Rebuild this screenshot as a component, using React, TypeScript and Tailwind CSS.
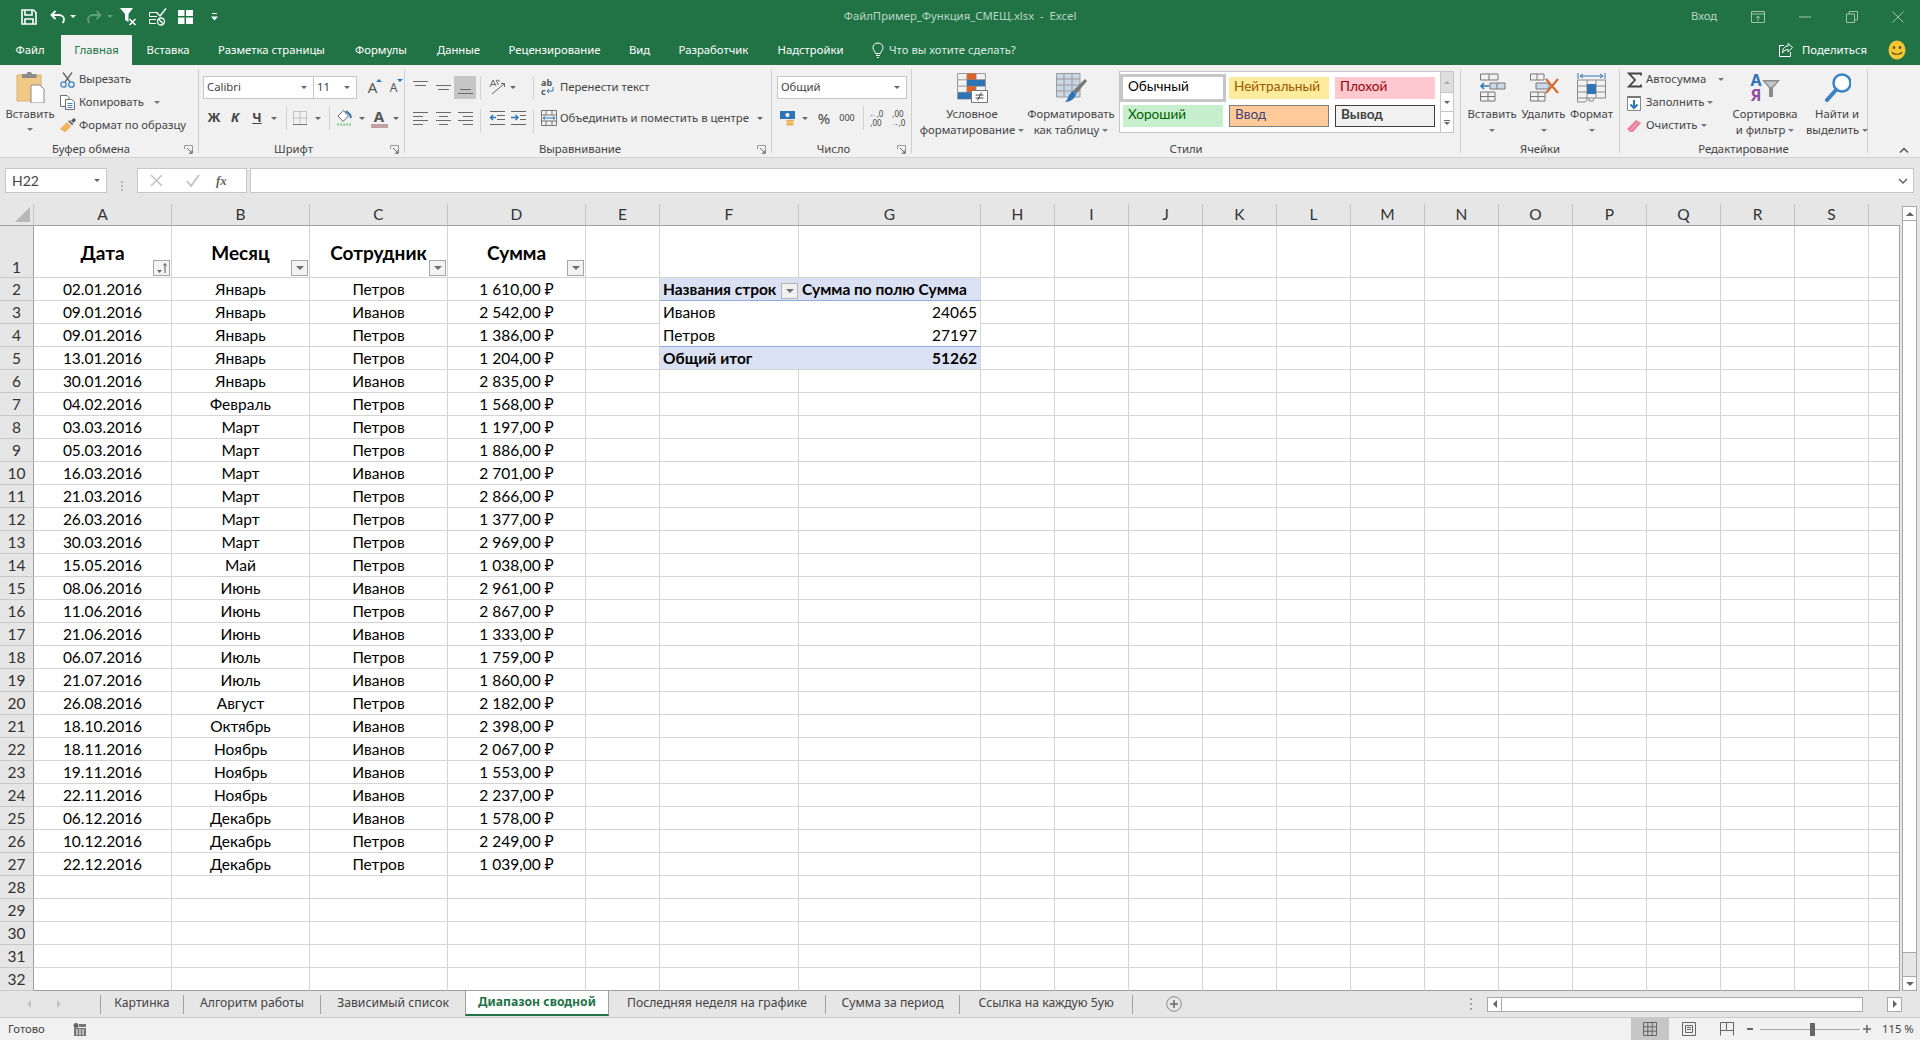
import React from 'react'

const cellFont = "font-['Lato','Carlito','Noto_Sans',sans-serif]"

const letters = ['A', 'B', 'C', 'D', 'E', 'F', 'G', 'H', 'I', 'J', 'K', 'L', 'M', 'N', 'O', 'P', 'Q', 'R', 'S', '']

const rows = [
    ['02.01.2016', 'Январь', 'Петров', '1 610,00 ₽'],
    ['09.01.2016', 'Январь', 'Иванов', '2 542,00 ₽'],
    ['09.01.2016', 'Январь', 'Петров', '1 386,00 ₽'],
    ['13.01.2016', 'Январь', 'Петров', '1 204,00 ₽'],
    ['30.01.2016', 'Январь', 'Иванов', '2 835,00 ₽'],
    ['04.02.2016', 'Февраль', 'Петров', '1 568,00 ₽'],
    ['03.03.2016', 'Март', 'Петров', '1 197,00 ₽'],
    ['05.03.2016', 'Март', 'Петров', '1 886,00 ₽'],
    ['16.03.2016', 'Март', 'Иванов', '2 701,00 ₽'],
    ['21.03.2016', 'Март', 'Петров', '2 866,00 ₽'],
    ['26.03.2016', 'Март', 'Петров', '1 377,00 ₽'],
    ['30.03.2016', 'Март', 'Петров', '2 969,00 ₽'],
    ['15.05.2016', 'Май', 'Петров', '1 038,00 ₽'],
    ['08.06.2016', 'Июнь', 'Иванов', '2 961,00 ₽'],
    ['11.06.2016', 'Июнь', 'Петров', '2 867,00 ₽'],
    ['21.06.2016', 'Июнь', 'Иванов', '1 333,00 ₽'],
    ['06.07.2016', 'Июль', 'Петров', '1 759,00 ₽'],
    ['21.07.2016', 'Июль', 'Иванов', '1 860,00 ₽'],
    ['26.08.2016', 'Август', 'Петров', '2 182,00 ₽'],
    ['18.10.2016', 'Октябрь', 'Иванов', '2 398,00 ₽'],
    ['18.11.2016', 'Ноябрь', 'Иванов', '2 067,00 ₽'],
    ['19.11.2016', 'Ноябрь', 'Иванов', '1 553,00 ₽'],
    ['22.11.2016', 'Ноябрь', 'Иванов', '2 237,00 ₽'],
    ['06.12.2016', 'Декабрь', 'Иванов', '1 578,00 ₽'],
    ['10.12.2016', 'Декабрь', 'Петров', '2 249,00 ₽'],
    ['22.12.2016', 'Декабрь', 'Петров', '1 039,00 ₽'],
]

const titles = ['Дата', 'Месяц', 'Сотрудник', 'Сумма']

function Caret({ className = 'border-t-[#666]' }: { className?: string }) {
    return <span className={`inline-block h-0 w-0 border-x-[3px] border-t-[3px] border-x-transparent ${className}`} />
}

function Launcher() {
    return (
        <svg width="9" height="9" viewBox="0 0 9 9" className="absolute bottom-[-1px] right-[5px]" fill="none">
            <path d="M.5 4V.5H8.5V8.5H5" stroke="#9a9a9a" />
            <path d="M3 3L8 8M8 5V8H5" stroke="#6d6d6d" />
        </svg>
    )
}

function Group({ label, launcher, w, children }: { label: string; launcher?: boolean; w: string; children: React.ReactNode }) {
    return (
        <div className={`relative flex h-[84px] shrink-0 flex-col border-r border-[#cfcfcf] ${w}`}>
            <div className="flex h-[76px] shrink-0">{children}</div>
            <div className={`h-[8px] text-center text-[11.3px] leading-[8px] text-[#444] ${launcher ? 'pr-4' : ''}`}>{label}</div>
            {launcher && <Launcher />}
        </div>
    )
}

function Big({ w, icon, lines, arrowBelow }: { w: string; icon: React.ReactNode; lines: string[]; arrowBelow?: boolean }) {
    return (
        <div className={`flex shrink-0 flex-col items-center pt-[3px] ${w}`}>
            <div className="flex h-[31px] items-center justify-center">{icon}</div>
            <div className="mt-[3px] flex flex-col items-center whitespace-nowrap text-[11.3px] leading-[16px] text-[#444]">
                {lines.map((l, i) => (
                    <span key={l} className="flex items-center gap-[3px]">
                        {l}
                        {!arrowBelow && i === lines.length - 1 && <Caret className="border-t-[#777]" />}
                    </span>
                ))}
                {arrowBelow && (
                    <span className="flex h-[16px] items-center">
                        <Caret className="border-t-[#777]" />
                    </span>
                )}
            </div>
        </div>
    )
}

function Small({ icon, text, caret, caretGap }: { icon: React.ReactNode; text: string; caret?: boolean; caretGap?: string }) {
    return (
        <div className="flex h-[23px] items-center whitespace-nowrap text-[11.3px] text-[#444]">
            <span className="flex w-[19px] shrink-0 items-center">{icon}</span>
            <span>{text}</span>
            {caret && <span className={`flex items-center ${caretGap}`}><Caret className="border-t-[#777]" /></span>}
        </div>
    )
}

function Sep() {
    return <span className="h-[24px] w-px shrink-0 bg-[#d4d4d4]" />
}

function Lines({ kind }: { kind: 'top' | 'middle' | 'bottom' | 'left' | 'center' | 'right' }) {
    const d = {
        top: 'M0 1.5H15M2 5.5H13',
        middle: 'M0 5.5H15M2 9.5H13',
        bottom: 'M2 9.5H13M0 13.5H15',
        left: 'M0 1.5H15M0 5.5H10M0 9.5H15M0 13.5H10',
        center: 'M0 1.5H15M3 5.5H12M0 9.5H15M3 13.5H12',
        right: 'M0 1.5H15M5 5.5H15M0 9.5H15M5 13.5H15',
    }[kind]
    return (
        <svg width="15" height="15" viewBox="0 0 15 15">
            <path d={d} stroke="#6a6a6a" fill="none" />
        </svg>
    )
}

function FilterButton({ sorted }: { sorted?: boolean }) {
    return (
        <span className="absolute bottom-[1px] right-[1px] flex h-[16px] w-[17px] items-center justify-center border border-[#a6a6a6] bg-[#f3f3f3]">
            {sorted ? (
                <svg width="13" height="12" viewBox="0 0 13 12">
                    <path d="M2 8H7L4.5 11Z" fill="#666" />
                    <path d="M10 11V2M8.5 3.5L10 1.5L11.5 3.5" stroke="#555" fill="none" />
                </svg>
            ) : (
                <Caret className="border-t-[#6f6f6f] !border-x-[4px] !border-t-[4px]" />
            )}
        </span>
    )
}

function Cell({ r, c }: { r: number; c: number }) {
    // r: 1-based sheet row, c: 0 = A
    const last = c === 19
    const inPivot = r >= 2 && r <= 5 && (c === 5 || c === 6)
    const hardBottom = r === 32 ? 'border-b-[#a0a0a0]' : 'border-b-[#d4d4d4]'
    const hardRight = last ? 'border-r-[#a0a0a0]' : 'border-r-[#d4d4d4]'

    if (r === 1) {
        return (
            <div className={`relative flex items-center justify-center border-b border-r bg-white pt-[4px] text-[19px] font-bold text-black ${hardBottom} ${hardRight}`}>
                {c < 4 && <span>{titles[c]}</span>}
                {c < 4 && <FilterButton sorted={c === 0} />}
            </div>
        )
    }
    if (inPivot) {
        const head = r === 2 || r === 5
        const fill = head ? 'bg-[#d9e1f2] font-bold' : 'bg-white'
        const bottom = r === 2 || r === 4 ? 'border-b border-b-[#8ea9db]' : r === 5 ? 'border-b border-b-[#d4d4d4]' : 'border-b border-b-white'
        const right = c === 5 ? 'border-r-0' : 'border-r border-r-[#d4d4d4]'
        let text: React.ReactNode = null
        if (c === 5) {
            text = ['Названия строк', 'Иванов', 'Петров', 'Общий итог'][r - 2]
        } else {
            text = ['Сумма по полю Сумма', '24065', '27197', '51262'][r - 2]
        }
        return (
            <div className={`relative flex items-center whitespace-nowrap px-[3px] pt-[2px] text-[15.5px] text-black ${fill} ${bottom} ${right} ${c === 6 && r > 2 ? 'justify-end pr-[3px]' : ''}`}>
                {text}
                {c === 5 && r === 2 && (
                    <span className="absolute bottom-[1px] right-[1px] flex h-[16px] w-[17px] items-center justify-center border border-[#b5b5b5] bg-[#f0f0f0]">
                        <Caret className="border-t-[#6f6f6f] !border-x-[4px] !border-t-[4px]" />
                    </span>
                )}
            </div>
        )
    }
    const data = r >= 2 && r <= 27 && c < 4 ? rows[r - 2][c] : ''
    return (
        <div className={`flex items-center justify-center whitespace-nowrap border-b border-r bg-white pt-[2px] text-[15.5px] text-black ${hardBottom} ${hardRight}`}>
            {data}
        </div>
    )
}

function Sheet() {
    const rowNums = Array.from({ length: 32 }, (_, i) => i + 1)
    return (
        <div className={`${cellFont} grid h-[787px] w-[1900px] grid-cols-[34px_138px_138px_138px_138px_74px_139px_182px_repeat(12,74px)_31px] grid-rows-[22px_52px_repeat(31,23px)]`}>
            <div className="flex items-center justify-end border-b border-r border-b-[#a0a0a0] border-r-[#c4c4c4] bg-[#e6e6e6] pr-[3px]">
                <svg width="15" height="15" viewBox="0 0 15 15">
                    <path d="M15 0V15H0Z" fill="#b8b8b8" />
                </svg>
            </div>
            {letters.map((l, i) => (
                <div key={i} className={`flex items-center justify-center border-b border-b-[#a0a0a0] bg-[#e6e6e6] text-[15.5px] text-[#333] ${i === 19 ? '' : 'border-r border-r-[#c4c4c4]'}`}>
                    {l}
                </div>
            ))}
            {rowNums.map(r => (
                <React.Fragment key={r}>
                    <div className={`flex justify-center border-b border-r border-b-[#c8c8c8] border-r-[#a0a0a0] bg-[#e6e6e6] text-[15.5px] text-[#333] ${r === 1 ? 'items-end leading-[20px]' : 'items-center pt-[2px]'}`}>
                        {r}
                    </div>
                    {letters.map((_, c) => (
                        <Cell key={c} r={r} c={c} />
                    ))}
                </React.Fragment>
            ))}
        </div>
    )
}

function TitleBar() {
    return (
        <div className="flex h-[35px] shrink-0 items-center pb-[2px] text-[11.3px]">
            <div className="flex w-[640px] items-center">
                <svg width="16" height="16" viewBox="0 0 16 16" className="ml-[21px]" fill="none">
                    <path d="M1 1H12.5L15 3.5V15H1Z" stroke="#fff" strokeWidth="1.6" />
                    <path d="M4 1.5V6H11V1.5M4 15V10H12V15" stroke="#fff" strokeWidth="1.6" />
                </svg>
                <svg width="16" height="14" viewBox="0 0 16 14" className="ml-[13px]" fill="none">
                    <path d="M5.5 1L1.5 5L5.5 9M2 5H9C12 5 14 7 14 9.5C14 11 13.4 12 12.5 13" stroke="#fff" strokeWidth="1.8" />
                </svg>
                <span className="ml-[4px] flex"><Caret className="border-t-white" /></span>
                <svg width="16" height="14" viewBox="0 0 16 14" className="ml-[10px]" fill="none">
                    <path d="M10.5 1L14.5 5L10.5 9M14 5H7C4 5 2 7 2 9.5C2 11 2.6 12 3.5 13" stroke="#5d9d7a" strokeWidth="1.8" />
                </svg>
                <span className="ml-[5px] flex"><Caret className="border-t-[#5d9d7a]" /></span>
                <svg width="17" height="20" viewBox="0 0 17 20" className="ml-[7px]" fill="none">
                    <path d="M0 1H13L8.5 7V15L5 13V7Z" fill="#fff" />
                    <path d="M9.5 12L15.5 18M15.5 12L9.5 18" stroke="#fff" strokeWidth="1.5" />
                </svg>
                <svg width="18" height="18" viewBox="0 0 18 18" className="ml-[12px]" fill="none" stroke="#fff">
                    <path d="M.5 4.5H9M.5 8.5H8M.5 4.5V8.5M.5 11.5H7M.5 15.5H7M.5 11.5V15.5" />
                    <path d="M8 5L11 8L17 .5" strokeWidth="1.4" />
                    <circle cx="12" cy="13.5" r="3.5" strokeWidth="1.3" />
                    <path d="M9.5 11L14.5 16" strokeWidth="1.3" />
                </svg>
                <svg width="15" height="14" viewBox="0 0 15 14" className="ml-[11px]" fill="#fff">
                    <path d="M0 0H6.5V6H0ZM8 0H15V6H8ZM0 7.5H6.5V14H0ZM8 7.5H15V14H8Z" />
                </svg>
                <svg width="7" height="8" viewBox="0 0 7 8" className="ml-[18px]" fill="#fff">
                    <path d="M1 0H6V1H1ZM0 3.5H7L3.5 7.5Z" />
                </svg>
            </div>
            <div className="w-[640px] text-center text-[#b9d6c5]">ФайлПример_Функция_СМЕЩ.xlsx&nbsp; - &nbsp;Excel</div>
            <div className="flex w-[640px] items-center text-[#b9d6c5]">
                <span className="ml-[411px] w-[60px]">Вход</span>
                <svg width="14" height="12" viewBox="0 0 14 12" fill="none" stroke="#9fc4ae">
                    <path d="M.5.5H13.5V11.5H.5ZM.5 3H13.5M7 10V5M5 7L7 5L9 7" />
                </svg>
                <svg width="12" height="2" viewBox="0 0 12 2" className="ml-[34px]"><path d="M0 1H12" stroke="#9fc4ae" /></svg>
                <svg width="12" height="12" viewBox="0 0 12 12" className="ml-[35px]" fill="none" stroke="#9fc4ae">
                    <path d="M.5 3H8.5V11.5H.5ZM3 3V.5H11.5V9H8.5" />
                </svg>
                <svg width="12" height="12" viewBox="0 0 12 12" className="ml-[34px]" fill="none" stroke="#9fc4ae">
                    <path d="M.5.5L11.5 11.5M11.5.5L.5 11.5" />
                </svg>
            </div>
        </div>
    )
}

function TabsBar() {
    return (
        <div className="flex h-[30px] shrink-0 items-center text-[11.3px] text-white">
            <span className="w-[60px] text-center">Файл</span>
            <span className="ml-px flex h-[30px] w-[71px] items-center justify-center bg-[#f1f1f1] text-[#217346]">Главная</span>
            <span className="w-[72px] text-center">Вставка</span>
            <span className="w-[135px] text-center">Разметка страницы</span>
            <span className="w-[84px] text-center">Формулы</span>
            <span className="w-[71px] text-center">Данные</span>
            <span className="w-[121px] text-center">Рецензирование</span>
            <span className="w-[49px] text-center">Вид</span>
            <span className="w-[99px] text-center">Разработчик</span>
            <span className="w-[95px] text-center">Надстройки</span>
            <svg width="12" height="17" viewBox="0 0 12 17" className="ml-[14px]" fill="none" stroke="#fff">
                <path d="M3.5 11.5C3.5 9.5 1 8.5 1 5.5C1 3 3 1 6 1C9 1 11 3 11 5.5C11 8.5 8.5 9.5 8.5 11.5ZM4 13.5H8M5 15.5H7" />
            </svg>
            <span className="ml-[5px] flex-1 text-[#dcebe2]">Что вы хотите сделать?</span>
            <svg width="14" height="14" viewBox="0 0 14 14" fill="none" stroke="#fff">
                <path d="M5 2.5H.5V13.5H11.5V9" />
                <path d="M13.5 4.5L9 .5V3C6 3 3.5 5.5 3.5 10C5 7.500 7 6.500 9 6.500V9Z" />
            </svg>
            <span className="ml-[9px]">Поделиться</span>
            <svg width="18" height="20" viewBox="0 0 18 20" className="ml-[21px] mr-[14px]">
                <ellipse cx="9" cy="10" rx="8.500" ry="9.500" fill="#f5c533" />
                <ellipse cx="6" cy="7.500" rx="1.200" ry="1.600" fill="#5a4a10" />
                <ellipse cx="12" cy="7.500" rx="1.200" ry="1.600" fill="#5a4a10" />
                <path d="M4 12C5.500 15 12.500 15 14 12" stroke="#5a4a10" fill="none" strokeWidth="1.200" />
            </svg>
        </div>
    )
}

function ClipboardGroup() {
    return (
        <Group label="Буфер обмена" launcher w="w-[199px]">
            <div className="flex w-[60px] shrink-0 flex-col items-center pt-[3px]">
                <svg width="29" height="31" viewBox="0 0 29 31">
                    <path d="M1 3H25V29H1Z" fill="#f0c987" stroke="#d9b26f" />
                    <path d="M6 3.500V2H10.500L11.500 0H15L16 2H20.500V6H6Z" fill="#8b8b8b" />
                    <path d="M15 13H24L28 17V31H15Z" fill="#fff" stroke="#8a8a8a" />
                </svg>
                <span className="mt-[3px] text-[11.3px] leading-[16px] text-[#444]">Вставить</span>
                <span className="mt-[6px] flex"><Caret className="border-t-[#777]" /></span>
            </div>
            <div className="-mt-px flex flex-col">
                <Small
                    text="Вырезать"
                    icon={
                        <svg width="15" height="16" viewBox="0 0 15 16" fill="none">
                            <path d="M3 .5L10 10M12 .5L5 10" stroke="#666" strokeWidth="1.300" />
                            <circle cx="3.500" cy="12.500" r="2.700" stroke="#3f83c4" strokeWidth="1.300" />
                            <circle cx="11.500" cy="12.500" r="2.700" stroke="#3f83c4" strokeWidth="1.300" />
                        </svg>
                    }
                />
                <Small
                    text="Копировать"
                    caret
                    caretGap="ml-[10px]"
                    icon={
                        <svg width="15" height="15" viewBox="0 0 15 15" fill="none" stroke="#6f6f6f">
                            <path d="M.5.5H7L9 2.500V11.500H.5Z" fill="#fff" />
                            <path d="M5.500 4.500H11.500L14.500 7V14.500H5.500Z" fill="#fff" />
                            <path d="M7.500 8.500H12.500M7.500 10.500H12.500M7.500 12.500H12.500" stroke="#3f83c4" />
                        </svg>
                    }
                />
                <Small
                    text="Формат по образцу"
                    icon={
                        <svg width="16" height="15" viewBox="0 0 16 15">
                            <path d="M0 11L7 4L11 8.500L5 14.500Z" fill="#efb45c" />
                            <path d="M8 3.500L12 7.500L13.500 6L9.500 2Z" fill="#777" />
                            <path d="M11 2.500L14 0L16 2L13.500 5Z" fill="#555" />
                        </svg>
                    }
                />
            </div>
        </Group>
    )
}

function FontGroup() {
    return (
        <Group label="Шрифт" launcher w="w-[206px]">
            <div className="flex flex-col">
                <div className="ml-[4px] mt-[7px] flex h-[23px] items-center">
                    <div className="flex h-[23px] w-[111px] items-center justify-between border border-[#c6c6c6] bg-white pl-[3px] pr-[6px] text-[11.3px] text-[#444]">
                        Calibri
                        <Caret />
                    </div>
                    <div className="flex h-[23px] w-[43px] items-center justify-between border border-l-0 border-[#c6c6c6] bg-white pl-[3px] pr-[6px] text-[11.3px] text-[#444]">
                        11
                        <Caret />
                    </div>
                    <div className="relative ml-[6px] flex w-[19px] justify-center text-[15px] leading-[17px] text-[#555]">
                        A<span className="absolute right-0 top-0 h-0 w-0 border-x-[3px] border-b-[3px] border-x-transparent border-b-[#2f74b5]" />
                    </div>
                    <div className="relative ml-[2px] flex w-[19px] justify-center text-[12px] leading-[17px] text-[#555]">
                        A<span className="absolute right-0 top-0 h-0 w-0 border-x-[3px] border-t-[3px] border-x-transparent border-t-[#2f74b5]" />
                    </div>
                </div>
                <div className="mt-[7px] flex h-[24px] items-center text-[13px] text-[#444]">
                    <span className="ml-[5px] w-[20px] text-center font-bold">Ж</span>
                    <span className="w-[22px] text-center font-bold italic">К</span>
                    <span className="w-[22px] text-center font-bold underline">Ч</span>
                    <span className="flex w-[12px] justify-center"><Caret /></span>
                    <span className="w-[6px]" />
                    <Sep />
                    <span className="flex w-[26px] justify-center">
                        <svg width="14" height="14" viewBox="0 0 14 14" fill="none">
                            <path d="M.5.500H13.500V13.500H.5ZM7 .5V13.500M.5 7H13.500" stroke="#9b9b9b" strokeDasharray="1 1" />
                            <path d="M0 13.500H14" stroke="#777" />
                        </svg>
                    </span>
                    <span className="flex w-[9px] justify-center"><Caret /></span>
                    <span className="w-[7px]" />
                    <Sep />
                    <span className="flex w-[28px] justify-center">
                        <svg width="17" height="18" viewBox="0 0 17 18" fill="none">
                            <path d="M2 7L7.500 1.500L12.500 7L7 12.500Z" fill="#fff" stroke="#666" />
                            <path d="M10 2L14 5.500L15 9" stroke="#2f74b5" strokeWidth="2" />
                            <path d="M1 15.500H15" stroke="#9ad29a" strokeWidth="2.500" strokeDasharray="2 1" />
                        </svg>
                    </span>
                    <span className="flex w-[7px] justify-center"><Caret /></span>
                    <span className="ml-[4px] flex w-[20px] flex-col items-center text-[15px] font-bold leading-[14px] text-[#555]">
                        A
                        <span className="mt-[1px] h-[4px] w-[17px] bg-[#c2a0a0]" />
                    </span>
                    <span className="ml-[3px] flex w-[8px] justify-center"><Caret /></span>
                </div>
            </div>
        </Group>
    )
}

function AlignGroup() {
    return (
        <Group label="Выравнивание" launcher w="w-[367px]">
            <div className="ml-[8px] flex w-[63px] shrink-0 flex-col">
                <div className="mt-[7px] flex h-[23px] items-center">
                    <span className="w-[23px]"><Lines kind="top" /></span>
                    <span className="w-[18px]"><Lines kind="middle" /></span>
                    <span className="flex h-[23px] w-[22px] items-center justify-center bg-[#c6c6c6]"><Lines kind="bottom" /></span>
                </div>
                <div className="mt-[7px] flex h-[24px] items-center">
                    <span className="w-[23px]"><Lines kind="left" /></span>
                    <span className="w-[22px]"><Lines kind="center" /></span>
                    <span className="w-[18px]"><Lines kind="right" /></span>
                </div>
            </div>
            <div className="ml-[4px] mt-[7px] flex w-px shrink-0 flex-col justify-between pb-[12px]">
                <Sep />
                <Sep />
            </div>
            <div className="flex w-[52px] shrink-0 flex-col pl-[8px]">
                <div className="mt-[7px] flex h-[23px] items-center gap-[4px]">
                    <svg width="17" height="17" viewBox="0 0 17 17" fill="none">
                        <path d="M3 15L15 5M12 4.500H15.500V8" stroke="#666" />
                        <path d="M1 8L4 1L7 7M2 5.500H6M7 1L9.500 6M8 1.500C10 .5 11 2 10 3" stroke="#666" />
                    </svg>
                    <Caret />
                </div>
                <div className="mt-[7px] flex h-[24px] items-center gap-[4px]">
                    <svg width="17" height="14" viewBox="0 0 17 14" fill="none">
                        <path d="M1 .5H16M8 4.500H16M8 8.500H16M1 13.500H16" stroke="#666" />
                        <path d="M7 6.500H1M4 4L1.500 6.500L4 9" stroke="#2f74b5" strokeWidth="1.400" />
                    </svg>
                    <svg width="17" height="14" viewBox="0 0 17 14" fill="none">
                        <path d="M1 .5H16M10 4.500H16M10 8.500H16M1 13.500H16" stroke="#666" />
                        <path d="M1 6.500H8M5.500 4L8 6.500L5.500 9" stroke="#2f74b5" strokeWidth="1.400" />
                    </svg>
                </div>
            </div>
            <div className="mt-[7px] flex w-px shrink-0 flex-col justify-between pb-[12px]">
                <Sep />
                <Sep />
            </div>
            <div className="flex flex-1 flex-col pl-[7px] text-[11.3px] text-[#444]">
                <div className="mt-[7px] flex h-[23px] items-center whitespace-nowrap">
                    <span className="mr-[3px] flex h-[20px] w-[16px] flex-col text-[9px] font-bold leading-[9px] text-[#555]">
                        ab
                        <span className="flex items-center">
                            c
                            <svg width="8" height="8" viewBox="0 0 8 8" fill="none">
                                <path d="M7 0V4H1M3 2L1 4L3 6" stroke="#2f74b5" />
                            </svg>
                        </span>
                    </span>
                    Перенести текст
                </div>
                <div className="mt-[7px] flex h-[24px] items-center whitespace-nowrap">
                    <svg width="16" height="16" viewBox="0 0 16 16" className="mr-[3px]" fill="none">
                        <path d="M.5.5H15.500V15.500H.5ZM.5 5H15.500M.5 11H15.500M5 .5V5M11 .5V5M5 11V15.500M11 11V15.500" stroke="#777" />
                        <path d="M2 8H14M4 6.500L2 8L4 9.500M12 6.500L14 8L12 9.500" stroke="#2f74b5" />
                    </svg>
                    Объединить и поместить в центре
                    <span className="ml-[8px] flex"><Caret /></span>
                </div>
            </div>
        </Group>
    )
}

function NumberGroup() {
    return (
        <Group label="Число" launcher w="w-[140px]">
            <div className="flex flex-col">
                <div className="ml-[5px] mt-[7px] flex h-[23px] w-[130px] items-center justify-between border border-[#c6c6c6] bg-white pl-[3px] pr-[6px] text-[11.3px] text-[#444]">
                    Общий
                    <Caret />
                </div>
                <div className="mt-[7px] flex h-[24px] items-center text-[#444]">
                    <span className="ml-[6px] flex w-[20px] justify-center">
                        <svg width="17" height="17" viewBox="0 0 17 17">
                            <path d="M0 1H15V9H0Z" fill="#2f74b5" />
                            <circle cx="7.500" cy="5" r="2" fill="#fff" />
                            <ellipse cx="10" cy="11" rx="4" ry="1.500" fill="#e8b658" />
                            <ellipse cx="10" cy="14" rx="4" ry="1.500" fill="#e8b658" />
                        </svg>
                    </span>
                    <span className="ml-[3px] flex w-[7px] justify-center"><Caret /></span>
                    <span className="ml-[8px] w-[16px] text-center text-[15px]">%</span>
                    <span className="ml-[6px] w-[18px] text-center text-[9px]">000</span>
                    <span className="ml-[7px] flex"><Sep /></span>
                    <span className="ml-[3px] w-[18px] text-center text-[8px] leading-[9px]">
                        <span className="text-[#2f74b5]">←</span>,0<br />,00
                    </span>
                    <span className="ml-[4px] w-[18px] text-center text-[8px] leading-[9px]">
                        ,00<br /><span className="text-[#2f74b5]">→</span>,0
                    </span>
                </div>
            </div>
        </Group>
    )
}

function StyleCell({ className, children }: { className: string; children: string }) {
    return (
        <div className={`flex h-[22px] w-[100px] items-center pb-[3px] pl-[5px] font-['Lato','Noto_Sans',sans-serif] text-[13.6px] ${className}`}>{children}</div>
    )
}

function StylesGroup() {
    return (
        <Group label="Стили" w="w-[549px]">
            <div className="ml-[24px] flex w-[72px] shrink-0 justify-center">
                <Big
                    w="w-[72px]"
                    lines={['Условное', 'форматирование']}
                    icon={
                        <svg width="31" height="30" viewBox="0 0 31 30" fill="none">
                            <path d="M.5.5H28.500V26H.5ZM10 .5V26M19 .5V26M.5 6.800H28.500M.5 13.100H28.500M.5 19.400H28.500" stroke="#9a9a9a" />
                            <path d="M10 .5H19V6.800H10Z" fill="#d9652b" />
                            <path d="M10 6.800H28V13.100H10Z" fill="#2f74b5" />
                            <path d="M10 13.100H19V19.400H10Z" fill="#d9652b" />
                            <path d="M1 19.400H19V26H1Z" fill="#2f74b5" />
                            <path d="M14.500 17.500H30.500V29.500H14.500Z" fill="#fff" stroke="#777" />
                            <path d="M18.500 22H26.500M18.500 25H26.500M24.500 19.500L20.500 27.500" stroke="#444" />
                        </svg>
                    }
                />
            </div>
            <div className="ml-[27px] flex w-[72px] shrink-0 justify-center">
                <Big
                    w="w-[72px]"
                    lines={['Форматировать', 'как таблицу']}
                    icon={
                        <svg width="31" height="30" viewBox="0 0 31 30" fill="none">
                            <path d="M.5.5H24V24H.5Z" fill="#c9d6e6" />
                            <path d="M.5.5H24V24H.5ZM8 .5V24M16 .5V24M.5 6H24M.5 12H24M.5 18H24" stroke="#9a9a9a" />
                            <path d="M29 6L31 8L20 21L17 18Z" fill="#777" />
                            <path d="M17 18L20 21C19 26 14 29 9 29C12 27 12 21 17 18Z" fill="#2f74b5" />
                        </svg>
                    }
                />
            </div>
            <div className="ml-[12px] mt-[2px] flex h-[62px] w-[335px] shrink-0 border border-[#c6c6c6] bg-white">
                <div className="ml-[3px] mt-[5px] grid h-[50px] w-[313px] grid-cols-[100px_100px_100px] gap-x-[6px] gap-y-[6px]">
                    <StyleCell className="bg-white text-black outline-[3px] outline-[#c6c6c6]">Обычный</StyleCell>
                    <StyleCell className="bg-[#ffeb9c] text-[#9c5700]">Нейтральный</StyleCell>
                    <StyleCell className="bg-[#ffc7ce] text-[#9c0006]">Плохой</StyleCell>
                    <StyleCell className="bg-[#c6efce] text-[#006100]">Хороший</StyleCell>
                    <StyleCell className="border border-[#7f7f7f] bg-[#ffcc99] text-[#3f3f76]">Ввод</StyleCell>
                    <StyleCell className="border border-[#3f3f3f] bg-[#f2f2f2] font-bold text-[#3f3f3f]">Вывод</StyleCell>
                </div>
                <div className="ml-[5px] flex w-[14px] flex-col border-l border-[#c6c6c6]">
                    <span className="flex h-[21px] items-center justify-center border-b border-[#c6c6c6] bg-[#dedede]">
                        <span className="h-0 w-0 border-x-[3px] border-b-[3px] border-x-transparent border-b-[#aaa]" />
                    </span>
                    <span className="flex h-[19px] items-center justify-center border-b border-[#c6c6c6] bg-white"><Caret /></span>
                    <span className="flex flex-1 flex-col items-center justify-center gap-[1px] bg-white">
                        <span className="h-px w-[6px] bg-[#666]" />
                        <Caret />
                    </span>
                </div>
            </div>
        </Group>
    )
}

function CellsGroup() {
    return (
        <Group label="Ячейки" w="w-[159px]">
            <Big
                w="w-[54px] ml-[4px]"
                arrowBelow
                lines={['Вставить']}
                icon={
                    <svg width="27" height="29" viewBox="0 0 27 29" fill="none" stroke="#777">
                        <path d="M1.500 1H19V7H1.500ZM10 1V7M1.500 19H16V28H1.500ZM9 19V28M1.500 23.500H16" />
                        <path d="M11 10H26V16H11ZM18 10V16" fill="#c9d9ea" />
                        <path d="M10 13H2M5 10L2 13L5 16" stroke="#2f74b5" strokeWidth="1.500" />
                    </svg>
                }
            />
            <Big
                w="w-[49px]"
                arrowBelow
                lines={['Удалить']}
                icon={
                    <svg width="30" height="29" viewBox="0 0 30 29" fill="none" stroke="#777">
                        <path d="M1.500 1H15V7H1.500ZM8 1V7M1.500 19H16V28H1.500ZM9 19V28M1.500 23.500H16" />
                        <path d="M7 10H20V16H7Z" fill="#c9d9ea" />
                        <path d="M17 6L29 20M29 6L17 20" stroke="#d9652b" strokeWidth="2" />
                    </svg>
                }
            />
            <Big
                w="w-[47px]"
                arrowBelow
                lines={['Формат']}
                icon={
                    <svg width="29" height="32" viewBox="0 0 29 32" fill="none" stroke="#8a8a8a">
                        <path d="M1 1V7M28 1V7" stroke="#2f74b5" />
                        <path d="M3 4H26M6 2L3 4L6 6M23 2L26 4L23 6" stroke="#2f74b5" />
                        <path d="M.5 8H28.500V26H.5ZM10 8V26M19 8V26M.5 14H28.500M.5 20H28.500" />
                        <path d="M10 12H19V22H10Z" fill="#2f74b5" stroke="none" />
                        <path d="M.5 26V30H8L10 28V26M12 26V29H16L17 26" />
                    </svg>
                }
            />
        </Group>
    )
}

function EditingGroup() {
    return (
        <Group label="Редактирование" w="w-[248px]">
            <div className="-mt-px ml-[7px] flex w-[105px] shrink-0 flex-col">
                <Small
                    text="Автосумма"
                    caret
                    caretGap="ml-[12px]"
                    icon={
                        <svg width="15" height="16" viewBox="0 0 15 16" fill="none">
                            <path d="M14 3.500V1.500H2L8 8L2 14.500H14V12.500" stroke="#444" strokeWidth="1.800" />
                        </svg>
                    }
                />
                <Small
                    text="Заполнить"
                    caret
                    caretGap="ml-[3px]"
                    icon={
                        <svg width="14" height="16" viewBox="0 0 14 16" fill="none">
                            <path d="M.5 1.500H13.500V15.500H.5Z" fill="#fff" stroke="#888" />
                            <path d="M.5 1H13.500V3H.5Z" fill="#777" />
                            <path d="M7 5V13M3.500 9.500L7 13L10.500 9.500" stroke="#2f74b5" strokeWidth="2" />
                        </svg>
                    }
                />
                <Small
                    text="Очистить"
                    caret
                    caretGap="ml-[3px]"
                    icon={
                        <svg width="15" height="14" viewBox="0 0 15 14">
                            <path d="M0 10L9 1L14 4L6 13H3Z" fill="#ec7f9b" />
                            <path d="M4 11L10 4" stroke="#fff" strokeDasharray="1 1" />
                        </svg>
                    }
                />
            </div>
            <Big
                w="w-[78px] ml-[-6px]"
                lines={['Сортировка', 'и фильтр']}
                icon={
                    <span className="flex h-[29px] w-[30px]">
                        <span className="w-[12px] text-center text-[16px] font-bold leading-[15px] text-[#2f74b5]">
                            A<br /><span className="text-[#8f4fa0]">Я</span>
                        </span>
                        <svg width="18" height="17" viewBox="0 0 18 17" className="mt-[7px]">
                            <path d="M0 0H18L11 8V17H7V8Z" fill="#8c8c8c" />
                            <path d="M3 1.500H15L10 7H8Z" fill="#c6c6c6" />
                        </svg>
                    </span>
                }
            />
            <Big
                w="w-[66px]"
                lines={['Найти и', 'выделить']}
                icon={
                    <svg width="28" height="29" viewBox="0 0 28 29" fill="none">
                        <circle cx="19" cy="10" r="8.500" stroke="#3b82c4" strokeWidth="2.500" fill="#fff" />
                        <path d="M13 17L4 27" stroke="#3b82c4" strokeWidth="4" strokeLinecap="round" />
                    </svg>
                }
            />
        </Group>
    )
}

function Ribbon() {
    return (
        <div className="h-[93px] shrink-0 border-b border-[#d2d2d2] bg-[#f1f1f1] pt-[4px]">
            <div className="flex items-start">
                <ClipboardGroup />
                <FontGroup />
                <AlignGroup />
                <NumberGroup />
                <StylesGroup />
                <CellsGroup />
                <EditingGroup />
                <svg width="10" height="6" viewBox="0 0 10 6" className="ml-[31px] mt-[78px]" fill="none">
                    <path d="M1 5.500L5 1.500L9 5.500" stroke="#555" strokeWidth="1.500" />
                </svg>
            </div>
        </div>
    )
}

function FormulaBar() {
    return (
        <div className="flex h-[46px] shrink-0 bg-[#e6e6e6] pt-[10px] text-[#444]">
            <div className="ml-[5px] flex h-[25px] w-[102px] items-center justify-between border border-[#c6c6c6] bg-white pl-[6px] pr-[6px] font-['Lato','Noto_Sans',sans-serif] text-[14px]">
                H22
                <Caret />
            </div>
            <div className="flex w-[30px] flex-col items-center justify-center gap-[2px]">
                <span className="size-[2px] bg-[#b5b5b5]" />
                <span className="size-[2px] bg-[#b5b5b5]" />
                <span className="size-[2px] bg-[#b5b5b5]" />
            </div>
            <div className="flex h-[25px] w-[110px] items-center border border-[#c6c6c6] bg-white">
                <svg width="13" height="13" viewBox="0 0 13 13" className="ml-[12px]" fill="none">
                    <path d="M1 1L12 12M12 1L1 12" stroke="#c2c2c2" strokeWidth="1.500" />
                </svg>
                <svg width="14" height="13" viewBox="0 0 14 13" className="ml-[23px]" fill="none">
                    <path d="M1 7L5 12L13 1" stroke="#c2c2c2" strokeWidth="1.800" />
                </svg>
                <span className="ml-[16px] font-['Liberation_Serif',serif] text-[13px] font-bold italic leading-none text-[#666]">fx</span>
            </div>
            <div className="ml-[3px] flex h-[25px] w-[1664px] items-center justify-end border border-[#c6c6c6] bg-white pr-[5px]">
                <svg width="10" height="6" viewBox="0 0 10 6" fill="none">
                    <path d="M1 1L5 5L9 1" stroke="#666" strokeWidth="1.500" />
                </svg>
            </div>
        </div>
    )
}

function VScroll() {
    return (
        <div className="ml-[2px] mt-[2px] flex h-[785px] w-[15px] flex-col border border-[#a8a8a8] bg-[#e6e6e6]">
            <span className="flex h-[14px] shrink-0 items-center justify-center border-b border-[#a8a8a8] bg-white">
                <span className="h-0 w-0 border-x-[4px] border-b-[4px] border-x-transparent border-b-[#666]" />
            </span>
            <span className="h-[732px] shrink-0 border-b border-[#a8a8a8] bg-white" />
            <span className="flex-1" />
            <span className="flex h-[14px] shrink-0 items-center justify-center border-t border-[#a8a8a8] bg-white">
                <span className="h-0 w-0 border-x-[4px] border-t-[4px] border-x-transparent border-t-[#666]" />
            </span>
        </div>
    )
}

function SheetTab({ w, children }: { w: string; children: string }) {
    return (
        <div className={`flex h-[19px] shrink-0 items-center justify-center border-r border-[#a0a0a0] pb-px ${w}`}>{children}</div>
    )
}

function SheetTabs() {
    return (
        <div className="flex h-[27px] shrink-0 items-center border-b border-[#c9c9c9] bg-[#e6e6e6] text-[12.2px] text-[#444]">
            <svg width="4" height="8" viewBox="0 0 4 8" className="ml-[27px]"><path d="M4 0V8L0 4Z" fill="#c2c2c2" /></svg>
            <svg width="4" height="8" viewBox="0 0 4 8" className="ml-[26px] mr-[39px]"><path d="M0 0V8L4 4Z" fill="#c2c2c2" /></svg>
            <div className="h-[19px] w-px bg-[#a0a0a0]" />
            <SheetTab w="w-[83px]">Картинка</SheetTab>
            <SheetTab w="w-[137px]">Алгоритм работы</SheetTab>
            <div className="flex h-[19px] w-[144px] shrink-0 items-center justify-center pb-px">Зависимый список</div>
            <div className="flex h-[25px] w-[144px] shrink-0 items-center justify-center self-start border-x border-b-[2px] border-x-[#a0a0a0] border-b-[#217346] bg-white font-bold text-[#217346]">Диапазон сводной</div>
            <SheetTab w="w-[217px]">Последняя неделя на графике</SheetTab>
            <SheetTab w="w-[134px]">Сумма за период</SheetTab>
            <SheetTab w="w-[173px]">Ссылка на каждую 5ую</SheetTab>
            <svg width="16" height="16" viewBox="0 0 16 16" className="ml-[33px]" fill="none">
                <circle cx="8" cy="8" r="7.300" stroke="#8a8a8a" />
                <path d="M8 4V12M4 8H12" stroke="#666" strokeWidth="1.500" />
            </svg>
            <div className="ml-[288px] flex w-[2px] flex-col gap-[3px]">
                <span className="size-[2px] bg-[#a5a5a5]" />
                <span className="size-[2px] bg-[#a5a5a5]" />
                <span className="size-[2px] bg-[#a5a5a5]" />
            </div>
            <div className="ml-[15px] flex h-[15px] w-[415px] items-stretch">
                <span className="flex w-[15px] items-center justify-center border border-[#a8a8a8] bg-white">
                    <span className="h-0 w-0 border-y-[4px] border-r-[4px] border-y-transparent border-r-[#666]" />
                </span>
                <span className="w-[361px] border-y border-r border-[#a8a8a8] bg-white" />
                <span className="w-[24px]" />
                <span className="flex w-[15px] items-center justify-center border border-[#a8a8a8] bg-white">
                    <span className="h-0 w-0 border-y-[4px] border-l-[4px] border-y-transparent border-l-[#666]" />
                </span>
            </div>
        </div>
    )
}

function StatusBar() {
    return (
        <div className="flex h-[22px] shrink-0 items-center bg-[#f1f1f1] text-[11.3px] text-[#444]">
            <span className="ml-[8px] w-[65px]">Готово</span>
            <svg width="13" height="13" viewBox="0 0 13 13">
                <circle cx="3" cy="2.500" r="2.500" fill="#666" />
                <path d="M6 1H13V4H6ZM1 5H13V13H1Z" fill="#777" />
                <path d="M3 7H5M6 7H8M9 7H11M3 9H5M6 9H8M9 9H11M3 11H5M6 11H8M9 11H11" stroke="#fff" />
            </svg>
            <div className="ml-[1545px] flex h-[22px] w-[38px] items-center justify-center bg-[#c6c6c6]">
                <svg width="14" height="14" viewBox="0 0 14 14" fill="none">
                    <path d="M.5.5H13.500V13.500H.5ZM4.800.5V13.500M9.200.5V13.500M.5 4.800H13.500M.5 9.200H13.500" stroke="#666" />
                </svg>
            </div>
            <svg width="14" height="14" viewBox="0 0 14 14" className="ml-[13px]" fill="none">
                <path d="M.5.5H13.500V13.500H.5Z" stroke="#666" />
                <path d="M3.500 3.500H10.500V10.500H3.500ZM5 5.500H9M5 7.500H9" stroke="#666" />
            </svg>
            <svg width="14" height="14" viewBox="0 0 14 14" className="ml-[24px]" fill="none">
                <path d="M.5 13.500V.5H13.500V13.500M6.500.5V8.500H.5M6.500 8.500H13.500V.5" stroke="#666" />
            </svg>
            <span className="ml-[13px] h-[2px] w-[6px] bg-[#666]" />
            <div className="relative ml-[7px] h-px w-[100px] bg-[#a5a5a5]">
                <span className="absolute left-[50px] top-[-6px] h-[13px] w-[5px] bg-[#666]" />
            </div>
            <svg width="8" height="8" viewBox="0 0 8 8" className="ml-[3px]"><path d="M4 0V8M0 4H8" stroke="#666" strokeWidth="1.500" /></svg>
            <span className="ml-[11px] whitespace-nowrap">115 %</span>
        </div>
    )
}

export default function App() {
    return (
        <div className="flex h-[1040px] w-[1920px] flex-col overflow-hidden bg-[#217346] font-['Noto_Sans',sans-serif]">
            <TitleBar />
            <TabsBar />
            <Ribbon />
            <FormulaBar />
            <div className="flex h-[787px] shrink-0 bg-[#e6e6e6]">
                <Sheet />
                <VScroll />
            </div>
            <SheetTabs />
            <StatusBar />
        </div>
    )
}
